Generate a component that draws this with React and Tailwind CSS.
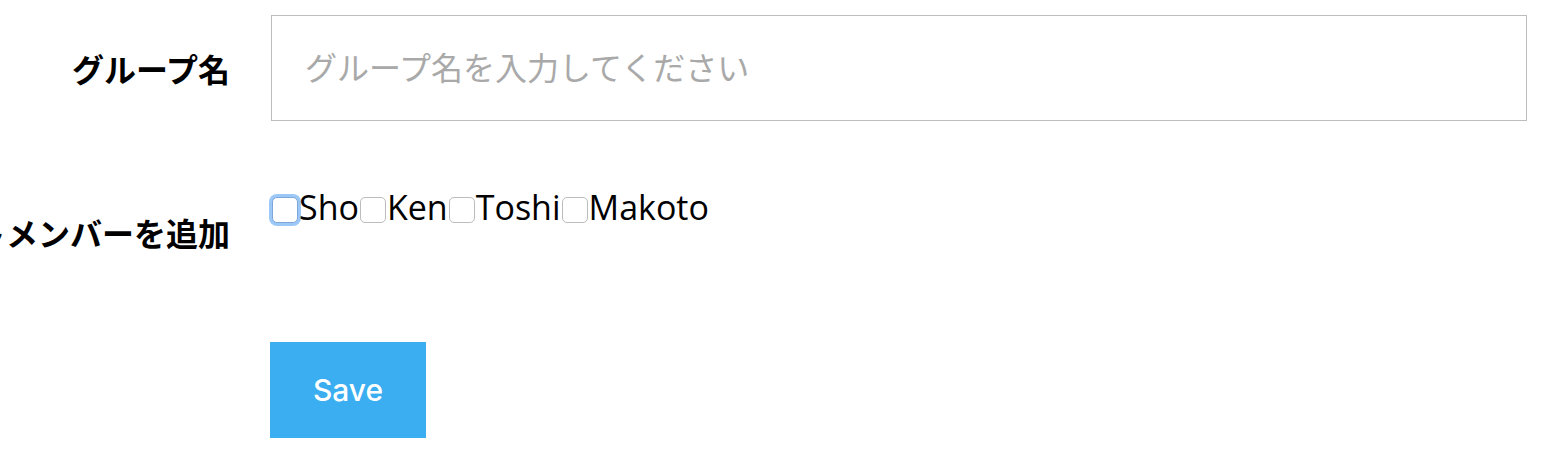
import { useState } from 'react';

const MEMBERS = ['Sho', 'Ken', 'Toshi', 'Makoto'];

const jp = { fontFamily: '"Noto Sans CJK JP", sans-serif' };

const App = () => {
  const [name, setName] = useState('');
  const [checked, setChecked] = useState({});

  return (
    <div className="w-[1564px] h-[462px] overflow-hidden bg-white pt-[15px] text-black" style={jp}>
      {/* group name */}
      <div className="flex items-center">
        <label className="w-[230px] shrink-0 text-right text-[32px] font-bold leading-[40px] whitespace-nowrap">
          グループ名
        </label>
        <input
          value={name}
          onChange={e => setName(e.target.value)}
          placeholder="グループ名を入力してください"
          className="ml-[41px] w-[1256px] h-[106px] border border-[#bdbdbd] px-[33px] pb-[4px] text-[32px] outline-none placeholder:text-[#a9a9a9]"
        />
      </div>

      {/* members */}
      <div className="flex items-start mt-[67px]">
        <div className="w-[230px] shrink-0 flex justify-end mt-[24px]">
          <label className="text-[32px] font-bold leading-[40px] whitespace-nowrap">
            チャットメンバーを追加
          </label>
        </div>
        <div
          className="ml-[40px] flex items-center h-[40px] text-[34px] leading-[40px]"
          style={{ fontFamily: '"Open Sans", sans-serif' }}
        >
          {MEMBERS.map((m, i) => (
            <label key={m} className="flex items-center">
              <input
                type="checkbox"
                checked={!!checked[m]}
                onChange={() => setChecked({ ...checked, [m]: !checked[m] })}
                className={`appearance-none m-0 mt-[4px] w-[26px] h-[26px] rounded-[5px] bg-white ${
                  i === 0
                    ? 'ml-[2px] mr-[1px] border border-[#7fa6d8] ring-[3px] ring-[#9cc8f8]'
                    : 'ml-[1px] mr-[1px] border border-[#bcbcbc]'
                }`}
              />
              <span className="mt-[-2px]">{m}</span>
            </label>
          ))}
        </div>
      </div>

      {/* save */}
      <div className="pl-[270px] mt-[90px]">
        <button
          className="w-[156px] h-[96px] bg-[#3aaef0] text-white text-[30px] font-medium"
          style={{ fontFamily: 'Inter, sans-serif' }}
        >
          Save
        </button>
      </div>
    </div>
  );
};

export default App;
